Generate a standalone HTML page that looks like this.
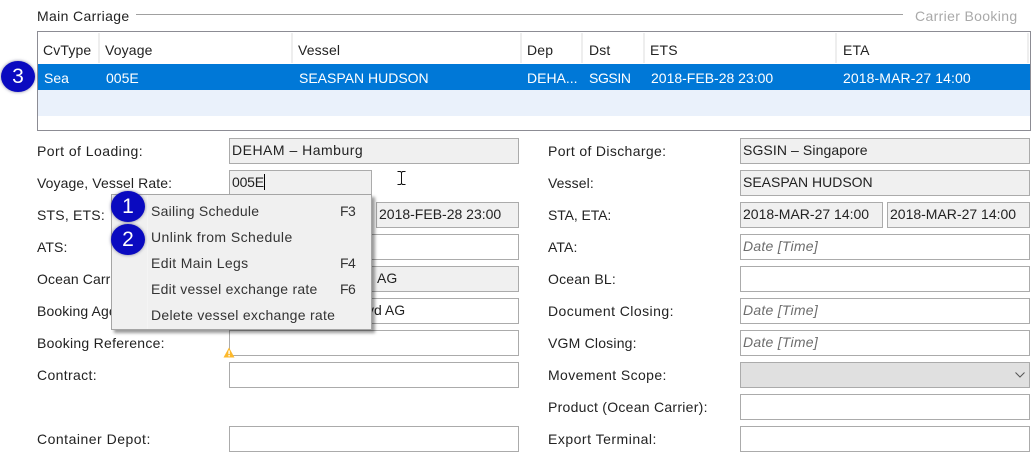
<!DOCTYPE html>
<html><head><meta charset="utf-8">
<style>
html,body{margin:0;padding:0;background:#fff;width:1036px;height:458px;overflow:hidden}
body{position:relative;font-family:"Liberation Sans",sans-serif;font-size:14px;color:#222}
.a{position:absolute;white-space:nowrap}
.l{position:absolute;left:37px;white-space:nowrap;line-height:18px;letter-spacing:.1px}
.r{left:548px}
.i{position:absolute;box-sizing:border-box;height:26px;border:1px solid #ababab;background:#fff;line-height:22px;padding-left:2px;white-space:nowrap;color:#222;overflow:hidden}
.g{background:#f0f0f0}
.lw{left:229px;width:290px}
.rw{left:740px;width:290px}
.p{font-style:italic;color:#6d6d6d;letter-spacing:.25px}
.h{position:absolute;top:33px;height:30px;width:2px;background:#eee}
.ht{position:absolute;top:41px;line-height:18px;color:#222;letter-spacing:.15px}
.c{position:absolute;top:69px;line-height:18px;color:#fff;white-space:nowrap}
.m{position:absolute;left:151px;line-height:18px;color:#333;white-space:nowrap}
.k{position:absolute;left:340px;line-height:18px;color:#333;letter-spacing:-.5px}
.b{position:absolute;width:34px;height:31px;border-radius:50%;background:#0a0ac0;color:#fff;text-align:center;font-size:21px;line-height:31px;box-shadow:0 0 3px rgba(40,40,90,.6)}
</style></head><body>

<div class="a" style="left:37px;top:7px;line-height:18px;letter-spacing:.35px">Main Carriage</div>
<div class="a" style="left:136px;top:14px;width:767px;height:1px;background:#a0a0a0"></div>
<div class="a" style="left:915px;top:7px;line-height:18px;color:#a9a9a9;letter-spacing:.35px">Carrier Booking</div>

<div class="a" style="left:37px;top:31px;width:994px;height:100px;box-sizing:border-box;border:1px solid #8c8c94"></div>
<div class="a" style="left:38px;top:64px;width:992px;height:26px;background:#0078d7"></div>
<div class="a" style="left:38px;top:90px;width:992px;height:26px;background:#eaf1fb"></div>

<div class="h" style="left:98px"></div>
<div class="h" style="left:291px"></div>
<div class="h" style="left:520px"></div>
<div class="h" style="left:581px"></div>
<div class="h" style="left:643px"></div>
<div class="h" style="left:835px"></div>
<div class="h" style="left:1027px"></div>

<div class="ht" style="left:43px">CvType</div>
<div class="ht" style="left:105px">Voyage</div>
<div class="ht" style="left:298px">Vessel</div>
<div class="ht" style="left:527px">Dep</div>
<div class="ht" style="left:589px">Dst</div>
<div class="ht" style="left:650px">ETS</div>
<div class="ht" style="left:843px">ETA</div>

<div class="c" style="left:44px">Sea</div>
<div class="c" style="left:106px">005E</div>
<div class="c" style="left:299px">SEASPAN HUDSON</div>
<div class="c" style="left:527px">DEHA...</div>
<div class="c" style="left:589px;letter-spacing:-.4px">SGSIN</div>
<div class="c" style="left:651px">2018-FEB-28 23:00</div>
<div class="c" style="left:843px;letter-spacing:.1px">2018-MAR-27 14:00</div>

<div class="b" style="left:1px;top:61px">3</div>

<div class="l" style="top:142px;letter-spacing:.45px">Port of Loading:</div>
<div class="l" style="top:174px">Voyage, Vessel Rate:</div>
<div class="l" style="top:206px;letter-spacing:.2px">STS, ETS:</div>
<div class="l" style="top:238px">ATS:</div>
<div class="l" style="top:270px">Ocean Carrier:</div>
<div class="l" style="top:302px">Booking Agent:</div>
<div class="l" style="top:334px;letter-spacing:.27px">Booking Reference:</div>
<div class="l" style="top:366px;letter-spacing:.35px">Contract:</div>
<div class="l" style="top:430px;letter-spacing:.5px">Container Depot:</div>

<div class="l r" style="top:142px;letter-spacing:.35px">Port of Discharge:</div>
<div class="l r" style="top:174px">Vessel:</div>
<div class="l r" style="top:206px;letter-spacing:-.1px">STA, ETA:</div>
<div class="l r" style="top:238px">ATA:</div>
<div class="l r" style="top:270px;letter-spacing:.2px">Ocean BL:</div>
<div class="l r" style="top:302px;letter-spacing:.45px">Document Closing:</div>
<div class="l r" style="top:334px;letter-spacing:.2px">VGM Closing:</div>
<div class="l r" style="top:366px;letter-spacing:.4px">Movement Scope:</div>
<div class="l r" style="top:398px;letter-spacing:.27px">Product (Ocean Carrier):</div>
<div class="l r" style="top:430px;letter-spacing:.5px">Export Terminal:</div>

<div class="i g lw" style="top:138px;letter-spacing:.5px">DEHAM – Hamburg</div>
<div class="i g" style="left:229px;width:143px;top:170px;letter-spacing:-.2px">005E<span style="display:inline-block;width:1px;height:16px;background:#000;vertical-align:-3px"></span></div>
<div class="i g" style="left:376px;width:143px;top:202px">2018-FEB-28 23:00</div>
<div class="i lw" style="top:234px"></div>
<div class="i g lw" style="top:266px;padding-left:147px">AG</div>
<div class="i lw" style="top:298px;padding-left:137px">yd AG</div>
<div class="i lw" style="top:330px"></div>
<div class="i lw" style="top:362px"></div>
<div class="i lw" style="top:426px"></div>

<div class="i g rw" style="top:138px;letter-spacing:.1px">SGSIN – Singapore</div>
<div class="i g rw" style="top:170px">SEASPAN HUDSON</div>
<div class="i g" style="left:740px;width:143px;top:202px">2018-MAR-27 14:00</div>
<div class="i g" style="left:887px;width:143px;top:202px">2018-MAR-27 14:00</div>
<div class="i rw p" style="top:234px">Date [Time]</div>
<div class="i rw" style="top:266px"></div>
<div class="i rw p" style="top:298px">Date [Time]</div>
<div class="i rw p" style="top:330px">Date [Time]</div>
<div class="i rw" style="top:362px;background:#e0e0e0"></div>
<div class="i rw" style="top:394px"></div>
<div class="i rw" style="top:426px"></div>

<svg class="a" style="left:1014px;top:371px" width="12" height="8" viewBox="0 0 12 8"><path d="M1.5 1.5 L6 6 L10.5 1.5" fill="none" stroke="#555" stroke-width="1"/></svg>

<svg class="a" style="left:396px;top:170px" width="12" height="16" viewBox="0 0 12 16"><path d="M1 1.5H4L5 2.5 6 1.5H9M5 2.5V13.5M1 14.5H4L5 13.5 6 14.5H9" transform="translate(0.5,0)" fill="none" stroke="#111" stroke-width="1"/></svg>

<svg class="a" style="left:223px;top:347px" width="12" height="11" viewBox="0 0 12 11"><path d="M6 .5L11.5 10.5H.5Z" fill="#fdb92c"/><rect x="5.4" y="3.5" width="1.4" height="3.6" fill="#fff"/><rect x="5.4" y="8" width="1.4" height="1.4" fill="#fff"/></svg>

<div class="a" style="left:111px;top:194px;width:261px;height:136px;box-sizing:border-box;background:#f0f0f0;border:1px solid #a5a5a5;box-shadow:3px 3px 3px rgba(0,0,0,.4)"></div>
<div class="a" style="left:147px;top:195px;width:1px;height:134px;background:#f4f4f4"></div>
<div class="m" style="top:202px;letter-spacing:.25px">Sailing Schedule</div><div class="k" style="top:202px">F3</div>
<div class="m" style="top:228px;letter-spacing:.43px">Unlink from Schedule</div>
<div class="m" style="top:254px;letter-spacing:.35px">Edit Main Legs</div><div class="k" style="top:254px">F4</div>
<div class="m" style="top:280px;letter-spacing:.25px">Edit vessel exchange rate</div><div class="k" style="top:280px">F6</div>
<div class="m" style="top:306px;letter-spacing:.28px">Delete vessel exchange rate</div>

<div class="b" style="left:111px;top:191px">1</div>
<div class="b" style="left:111px;top:224px">2</div>

</body></html>
